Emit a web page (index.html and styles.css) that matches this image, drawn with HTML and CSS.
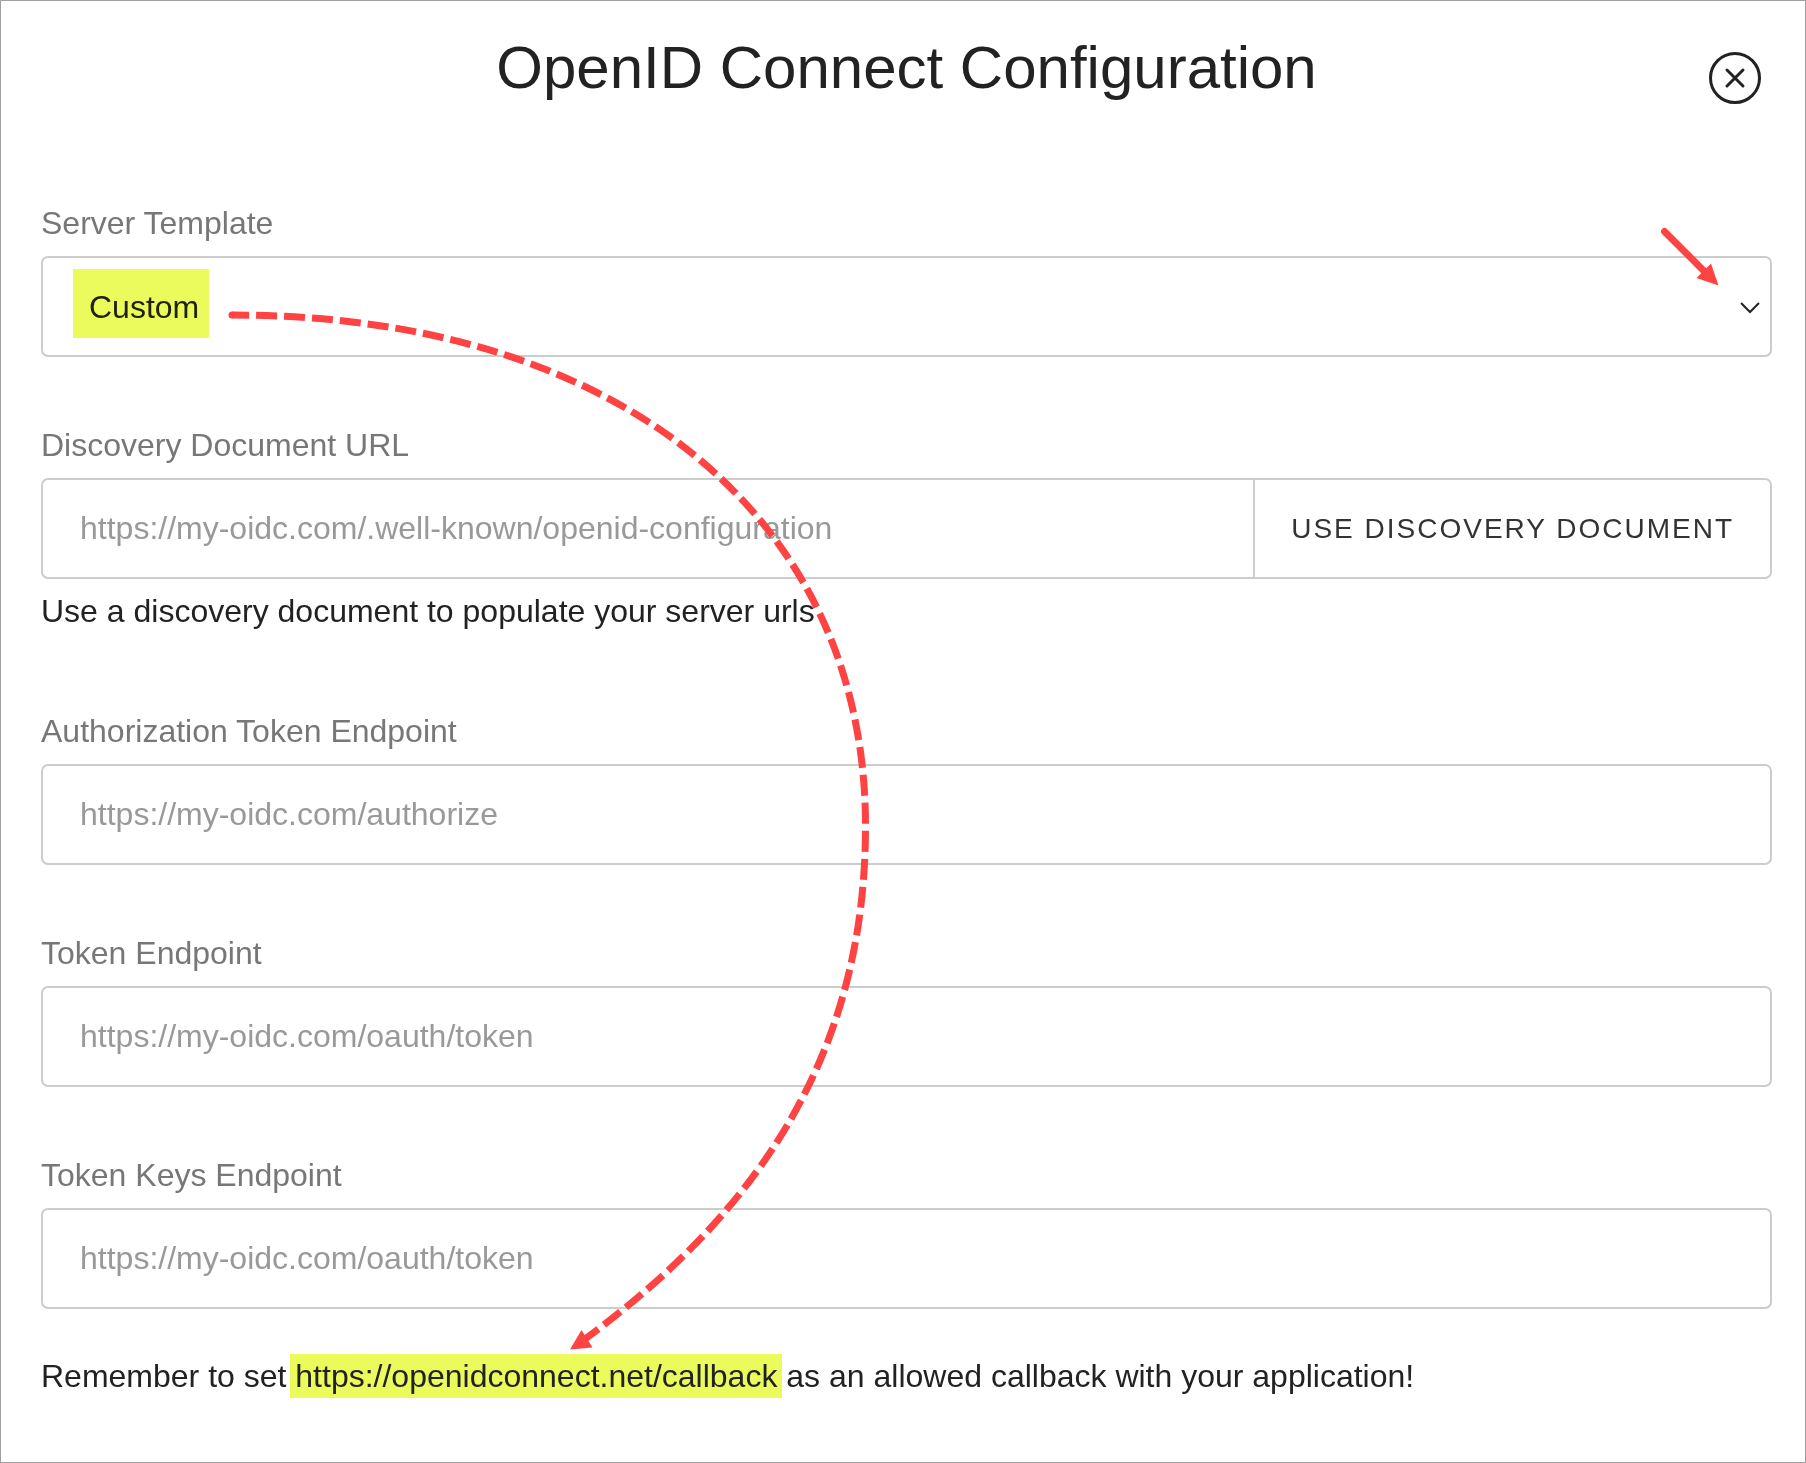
FILE: index.html
```html
<!DOCTYPE html>
<html lang="en">
    <head>
        <meta charset="utf-8">
        <title>OpenID Connect Configuration</title>
        <link rel="stylesheet" href="styles.css">
    </head>
    <body>
        <div class="modal">
            <div class="modal-header">
                <h1>OpenID Connect Configuration</h1>
                <button type="button" class="close-btn" aria-label="Close">
                    <svg width="52" height="52" viewBox="0 0 52 52">
                        <circle cx="26" cy="26" r="24.5"/>
                        <path d="M18 18L34 34M34 18L18 34"/>
                    </svg>
                </button>
            </div>

            <form class="config-form">
                <div class="field">
                    <label for="server-template">Server Template</label>
                    <div class="select-wrap">
                        <select id="server-template">
                            <option>Custom</option>
                        </select>
                        <svg class="chevron" width="20" height="12" viewBox="0 0 20 12">
                            <path d="M1 1L10 10L19 1"/>
                        </svg>
                    </div>
                </div>

                <div class="field">
                    <label for="discovery-url">Discovery Document URL</label>
                    <div class="input-group">
                        <input type="text" id="discovery-url" placeholder="https://my-oidc.com/.well-known/openid-configuration">
                        <button type="button" class="discovery-btn">USE DISCOVERY DOCUMENT</button>
                    </div>
                    <p class="hint">Use a discovery document to populate your server urls</p>
                </div>

                <div class="field">
                    <label for="auth-endpoint">Authorization Token Endpoint</label>
                    <input type="text" id="auth-endpoint" placeholder="https://my-oidc.com/authorize">
                </div>

                <div class="field">
                    <label for="token-endpoint">Token Endpoint</label>
                    <input type="text" id="token-endpoint" placeholder="https://my-oidc.com/oauth/token">
                </div>

                <div class="field">
                    <label for="keys-endpoint">Token Keys Endpoint</label>
                    <input type="text" id="keys-endpoint" placeholder="https://my-oidc.com/oauth/token">
                </div>

                <p class="callback-note">Remember to set <mark>https://openidconnect.net/callback</mark> as an allowed callback with your application!</p>
            </form>

            <!-- arrow from the template to the callback url -->
            <svg class="arrow arrow-callback" width="660" height="1060" viewBox="220 300 660 1060">
                <circle cx="232" cy="315" r="3.5"/>
                <path class="dashes" d="M232 315C622 315 865.5 520 865.5 826C865.5 1046 766 1206 585 1339"/>
                <path d="M570 1349.5L581.5 1330L592.5 1347.5Z"/>
            </svg>

            <!-- arrow to the drop-down -->
            <svg class="arrow arrow-select" width="60" height="64" viewBox="1660 224 60 64">
                <path class="shaft" d="M1664.5 231.5L1706 273"/>
                <path d="M1718.5 285.5L1696.5 278L1711 263.5Z"/>
            </svg>
        </div>
    </body>
</html>
```
FILE: styles.css
```css
* { box-sizing: border-box; }
body { margin: 0; background: #fff; color: #222; font-family: Arial, "Liberation Sans", sans-serif; font-size: 32px; line-height: 50px; }
.modal { position: relative; min-height: 100vh; padding: 31px 33px 60px 40px; border: 1px solid #a0a0a0; }

.modal-header { display: grid; grid-template-columns: 1fr auto 1fr; align-items: start; margin-bottom: 94px; }
h1 { grid-column: 2; margin: 0; font-size: 60px; font-weight: normal; line-height: 72px; }
.close-btn { justify-self: end; width: 52px; height: 52px; margin: 20px 11px 0 0; padding: 0; border: none; background: none; cursor: pointer; }
.close-btn svg { display: block; fill: none; stroke: #222; stroke-width: 3; stroke-linecap: round; }

.field { margin-bottom: 63px; }
label { display: block; margin-bottom: 8px; color: #777; }
input, select { display: block; width: 100%; height: 101px; padding: 0 37px; border: 2px solid #ccc; border-radius: 7px; background: #fff; color: #222; font: inherit; }
input::placeholder { color: #999; opacity: 1; }

.select-wrap { position: relative; }
.select-wrap::after { content: ""; position: absolute; top: 13px; left: 32px; width: 136px; height: 69px; background: #ebfb5c; mix-blend-mode: multiply; pointer-events: none; }
select { appearance: none; padding: 0 46px; }
.chevron { position: absolute; top: 46px; right: 12px; fill: none; stroke: #222; stroke-width: 2; pointer-events: none; }

.input-group { display: flex; }
.input-group input { flex: 1; border-right: none; border-radius: 7px 0 0 7px; }
.discovery-btn { height: 101px; padding: 0 36px; border: 2px solid #ccc; border-radius: 0 7px 7px 0; background: #fff; color: #333; font: inherit; font-size: 28px; letter-spacing: 2px; cursor: pointer; }

.hint { margin: 7px 0 70px; }
.callback-note { margin: -21px 0 0; }
mark { margin: 0 -5px; padding: 4px 5px; background: #ebfb5c; color: inherit; }

.arrow { position: absolute; fill: #ff4242; pointer-events: none; }
.arrow-callback { top: 299px; left: 219px; }
.arrow-select { top: 223px; left: 1659px; }
.dashes { fill: none; stroke: #ff4242; stroke-width: 7; stroke-dasharray: 21 7; stroke-dashoffset: 4; }
.shaft { stroke: #ff4242; stroke-width: 7; stroke-linecap: round; }
```
